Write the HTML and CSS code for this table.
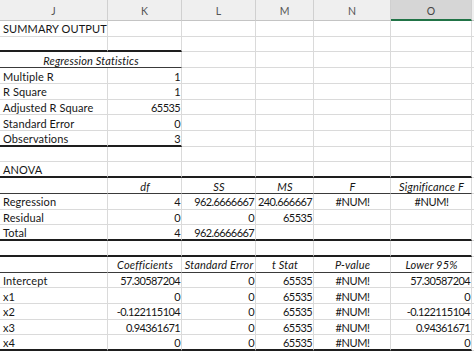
FILE: index.html
```html
<!DOCTYPE html>
<html>
<head>
<meta charset="utf-8">
<link rel="stylesheet" href="styles.css">
</head>
<body>
<div class="sheet">
  <div class="h">J</div><div class="h">K</div><div class="h">L</div><div class="h">M</div><div class="h">N</div><div class="h sel">O</div><div class="h"></div>

  <div class="c">SUMMARY OUTPUT</div><div class="c"></div><div class="c"></div><div class="c"></div><div class="c"></div><div class="c"></div><div class="c"></div>

  <div class="c t"></div><div class="c t"></div><div class="c"></div><div class="c"></div><div class="c"></div><div class="c"></div><div class="c"></div>

  <div class="c m hd span2">Regression Statistics</div><div class="c"></div><div class="c"></div><div class="c"></div><div class="c"></div><div class="c"></div>

  <div class="c">Multiple R</div><div class="c r">1</div><div class="c"></div><div class="c"></div><div class="c"></div><div class="c"></div><div class="c"></div>
  <div class="c">R Square</div><div class="c r">1</div><div class="c"></div><div class="c"></div><div class="c"></div><div class="c"></div><div class="c"></div>
  <div class="c">Adjusted R Square</div><div class="c r">65535</div><div class="c"></div><div class="c"></div><div class="c"></div><div class="c"></div><div class="c"></div>
  <div class="c">Standard Error</div><div class="c r">0</div><div class="c"></div><div class="c"></div><div class="c"></div><div class="c"></div><div class="c"></div>
  <div class="c t">Observations</div><div class="c t r">3</div><div class="c"></div><div class="c"></div><div class="c"></div><div class="c"></div><div class="c"></div>

  <div class="c"></div><div class="c"></div><div class="c"></div><div class="c"></div><div class="c"></div><div class="c"></div><div class="c"></div>

  <div class="c t">ANOVA</div><div class="c t"></div><div class="c t"></div><div class="c t"></div><div class="c t"></div><div class="c t"></div><div class="c"></div>

  <div class="c m"></div><div class="c m hd">df</div><div class="c m hd">SS</div><div class="c m hd">MS</div><div class="c m hd">F</div><div class="c m hd">Significance F</div><div class="c"></div>

  <div class="c">Regression</div><div class="c r">4</div><div class="c r">962.6666667</div><div class="c r">240.666667</div><div class="c ctr">#NUM!</div><div class="c ctr">#NUM!</div><div class="c"></div>
  <div class="c">Residual</div><div class="c r">0</div><div class="c r">0</div><div class="c r">65535</div><div class="c"></div><div class="c"></div><div class="c"></div>
  <div class="c t">Total</div><div class="c t r">4</div><div class="c t r">962.6666667</div><div class="c t"></div><div class="c t"></div><div class="c t"></div><div class="c"></div>

  <div class="c t"></div><div class="c t"></div><div class="c t"></div><div class="c t"></div><div class="c t"></div><div class="c t"></div><div class="c"></div>

  <div class="c m"></div><div class="c m hd">Coefficients</div><div class="c m hd">Standard Error</div><div class="c m hd">t Stat</div><div class="c m hd">P-value</div><div class="c m hd">Lower 95%</div><div class="c"></div>

  <div class="c">Intercept</div><div class="c r">57.30587204</div><div class="c r">0</div><div class="c r">65535</div><div class="c ctr">#NUM!</div><div class="c r">57.30587204</div><div class="c"></div>
  <div class="c">x1</div><div class="c r">0</div><div class="c r">0</div><div class="c r">65535</div><div class="c ctr">#NUM!</div><div class="c r">0</div><div class="c"></div>
  <div class="c">x2</div><div class="c r">-0.122115104</div><div class="c r">0</div><div class="c r">65535</div><div class="c ctr">#NUM!</div><div class="c r">-0.122115104</div><div class="c"></div>
  <div class="c">x3</div><div class="c r">0.94361671</div><div class="c r">0</div><div class="c r">65535</div><div class="c ctr">#NUM!</div><div class="c r">0.94361671</div><div class="c"></div>
  <div class="c t">x4</div><div class="c t r">0</div><div class="c t r">0</div><div class="c t r">65535</div><div class="c t ctr">#NUM!</div><div class="c t r">0</div><div class="c"></div>
</div>
</body>
</html>
```

FILE: styles.css
```css
html, body {
  margin: 0;
  padding: 0;
  background: #ffffff;
}

.sheet {
  display: grid;
  grid-template-columns: 108px 74px 74px 58px 77px 81px 1fr;
  grid-template-rows: 21px;
  grid-auto-rows: 15.72px;
  width: 474px;
  font-family: Lato, "Liberation Sans", sans-serif;
  font-size: 11px;
  letter-spacing: 0.1px;
  color: #161616;
}

.h {
  box-sizing: border-box;
  background: #efefef;
  color: #555555;
  border-right: 1px solid #d0d0d0;
  border-bottom: 1px solid #c4c4c4;
  display: flex;
  align-items: center;
  justify-content: center;
  font-size: 10.5px;
  letter-spacing: 0;
  padding-top: 2px;
}

.h.sel {
  background: #d6d6d6;
  border-bottom: 2px solid #217346;
  color: #444444;
}

.c {
  box-sizing: border-box;
  border-right: 1px solid #dadada;
  border-bottom: 1px solid #dadada;
  padding: 1px 2px 0 3px;
  display: flex;
  align-items: center;
  white-space: nowrap;
  overflow: visible;
  min-width: 0;
}

.r {
  justify-content: flex-end;
  letter-spacing: -0.6px;
  padding-right: 1px;
}

.ctr {
  justify-content: center;
  letter-spacing: -0.4px;
}

.hd {
  justify-content: center;
  font-style: italic;
  letter-spacing: 0.15px;
}

.span2 {
  grid-column: span 2;
}

.t {
  border-bottom: 2px solid #1e1e1e;
}

.m {
  border-bottom: 1px solid #3a3a3a;
}
```
